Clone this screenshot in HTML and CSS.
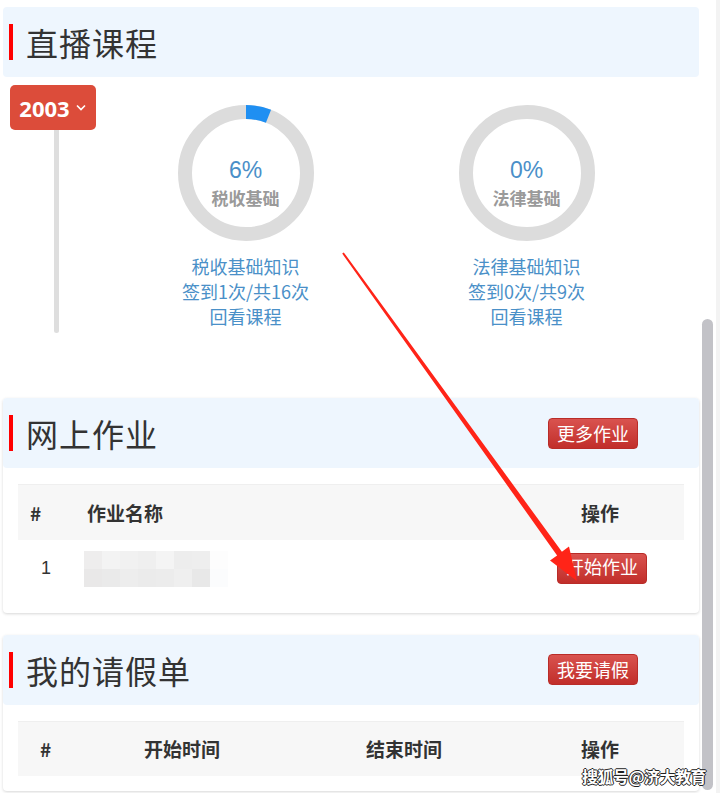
FILE: index.html
```html
<!DOCTYPE html>
<html lang="zh-CN">
<head>
    <meta charset="UTF-8">
    <title>学习中心</title>
    <link rel="stylesheet" href="styles.css">
</head>
<body>
<div class="page">
    <div class="main">
        <!-- 直播课程 -->
        <section class="card card-live">
            <div class="head">
                <h2>直播课程</h2>
            </div>
            <div class="live">
                <div class="year">
                    <span class="year-btn">2003 <svg width="10" height="7" viewBox="0 0 10 7"><path d="M1 1.5 L5 5.5 L9 1.5" fill="none" stroke="#fff" stroke-width="1.6"/></svg></span>
                    <span class="year-line"></span>
                </div>
                <div class="course">
                    <div class="ring">
                        <svg width="136" height="136" viewBox="0 0 136 136">
                            <circle cx="68" cy="68" r="61" fill="none" stroke="#dcdcdc" stroke-width="14"/>
                            <circle cx="68" cy="68" r="61" fill="none" stroke="#1f8ff2" stroke-width="14"
                                    stroke-dasharray="23 400" transform="rotate(-90 68 68)"/>
                        </svg>
                        <div class="ring-text">
                            <span class="pct">6%</span>
                            <span class="name">税收基础</span>
                        </div>
                    </div>
                    <p>税收基础知识</p>
                    <p>签到1次/共16次</p>
                    <p>回看课程</p>
                </div>
                <div class="course">
                    <div class="ring">
                        <svg width="136" height="136" viewBox="0 0 136 136">
                            <circle cx="68" cy="68" r="61" fill="none" stroke="#dcdcdc" stroke-width="14"/>
                        </svg>
                        <div class="ring-text">
                            <span class="pct">0%</span>
                            <span class="name">法律基础</span>
                        </div>
                    </div>
                    <p>法律基础知识</p>
                    <p>签到0次/共9次</p>
                    <p>回看课程</p>
                </div>
            </div>
        </section>

        <!-- 网上作业 -->
        <section class="card">
            <div class="head">
                <h2>网上作业</h2>
                <a class="btn" href="#">更多作业</a>
            </div>
            <table class="tb tb-work">
                <thead>
                <tr><th class="c1">#</th><th class="c2">作业名称</th><th class="c3">操作</th></tr>
                </thead>
                <tbody>
                <tr>
                    <td class="c1">1</td>
                    <td class="c2">
                        <div class="mosaic">
                            <i style="background:#eeeded"></i><i style="background:#f3f3f3"></i><i style="background:#f1f1f1"></i><i style="background:#efefef"></i><i style="background:#f4f4f4"></i><i style="background:#ededed"></i><i style="background:#eeeeee"></i><i style="background:#fdfdfd"></i>
                            <i style="background:#e9e8e8"></i><i style="background:#eaeaea"></i><i style="background:#ededed"></i><i style="background:#ebebeb"></i><i style="background:#ececec"></i><i style="background:#efefef"></i><i style="background:#e8e8e8"></i><i style="background:#fbfcfd"></i>
                        </div>
                    </td>
                    <td class="c3"><a class="btn" href="#">开始作业</a></td>
                </tr>
                </tbody>
            </table>
        </section>

        <!-- 我的请假单 -->
        <section class="card">
            <div class="head">
                <h2>我的请假单</h2>
                <a class="btn" href="#">我要请假</a>
            </div>
            <table class="tb tb-leave">
                <thead>
                <tr><th class="l1">#</th><th class="l2">开始时间</th><th class="l3">结束时间</th><th class="l4">操作</th></tr>
                </thead>
            </table>
        </section>
    </div>
    <div class="scroll">
        <div class="thumb"></div>
    </div>

    <!-- 标注箭头 -->
    <svg class="arrow" width="720" height="793" viewBox="0 0 720 793">
        <polygon points="343.8,252.4 561.9,551.8 569,546.5 577,581 550,560.5 557.1,555.4 342.2,253.6" fill="#ff2418"/>
    </svg>
    <div class="mark">搜狐号@济大教育</div>
</div>
</body>
</html>
```

FILE: styles.css
```css
*{
    margin: 0;
    padding: 0;
    box-sizing: border-box;
}
body{
    background: #fff;
    font-family: "Noto Sans CJK SC", "Noto Sans", sans-serif;
    color: #333;
    height: 793px;
    overflow: hidden;
}
.page{
    position: relative;
    display: flex;
    height: 793px;
}
.main{
    width: 699px;
    padding: 7px 0 0 3px;
}
a{
    text-decoration: none;
}

/*卡片*/
.card{
    border-radius: 4px;
    box-shadow: 0 1px 3px rgba(0, 0, 0, 0.16);
    margin-bottom: 22px;
    padding-bottom: 15px;
}
.card-live{
    box-shadow: none;
    margin-bottom: 0;
    padding-bottom: 0;
}
.head{
    height: 70px;
    background: #eef6fe;
    border-radius: 4px;
    display: flex;
    align-items: center;
    justify-content: space-between;
    padding: 0 61px 0 6px;
}
.head h2{
    font-size: 32px;
    font-weight: normal;
    color: #333;
    border-left: 4px solid #f00;
    padding-left: 13px;
    line-height: 36px;
    height: 36px;
    letter-spacing: 1px;
}
.btn{
    display: inline-block;
    height: 31px;
    line-height: 28px;
    padding: 0 8px;
    font-size: 18px;
    color: #fff;
    background: linear-gradient(#d9534f, #c12e2a);
    border: 1px solid #b92c28;
    border-radius: 4px;
}

/*直播课程*/
.live{
    display: flex;
    padding: 8px 0 65px 8px;
}
.year{
    width: 94px;
    display: flex;
    flex-direction: column;
    align-items: center;
    padding-right: 3px;
}
.year-btn{
    width: 86px;
    height: 45px;
    background: #dc4c3a;
    border-radius: 5px;
    color: #fff;
    font-family: "Open Sans", sans-serif;
    font-weight: 700;
    font-size: 22px;
    display: flex;
    align-items: center;
    justify-content: center;
    gap: 6px;
    margin-left: -8px;
}
.year-line{
    width: 5px;
    height: 203px;
    background: #dedede;
    border-radius: 0 0 3px 3px;
}
.course{
    width: 281px;
    padding-top: 20px;
    text-align: center;
}
.ring{
    position: relative;
    width: 136px;
    height: 136px;
    margin: 0 auto 13px;
}
.ring svg{
    display: block;
}
.ring-text{
    position: absolute;
    left: 0;
    top: 0;
    width: 100%;
    height: 100%;
    display: flex;
    flex-direction: column;
    align-items: center;
    justify-content: center;
    padding-top: 22px;
}
.ring-text .pct{
    font-family: "Liberation Sans", sans-serif;
    font-size: 23px;
    line-height: 28px;
    color: #4a8fc8;
}
.ring-text .name{
    font-size: 17px;
    line-height: 28px;
    font-weight: 700;
    color: #9a9a9a;
}
.course p{
    font-size: 18px;
    line-height: 25px;
    color: #4a90c8;
}

/*表格*/
.tb{
    width: 666px;
    margin: 16px 0 0 15px;
    border-collapse: collapse;
}
.tb th{
    height: 55px;
    background: #f7f7f7;
    border-top: 1px solid #efefef;
    font-size: 19px;
    font-weight: 600;
    color: #333;
    text-align: left;
}
.tb td{
    height: 58px;
    font-size: 18px;
    font-family: "Liberation Sans", sans-serif;
}
.tb-work .c1{
    width: 57px;
    padding-left: 12px;
}
.tb-work td.c1{
    padding-left: 23px;
}
.tb-work .c2{
    padding-left: 12px;
}
.tb-work .c3{
    width: 150px;
    padding-left: 47px;
}
.tb-work td.c3{
    padding-left: 23px;
}
.mosaic{
    display: grid;
    grid-template-columns: repeat(8, 18px);
    grid-auto-rows: 18px;
    margin-left: -3px;
}
.tb-leave .l1{
    width: 60px;
    padding-left: 22px;
}
.tb-leave .l2{
    width: 222px;
    padding-left: 66px;
}
.tb-leave .l3{
    width: 214px;
    padding-left: 66px;
}
.tb-leave .l4{
    padding-left: 67px;
}

/*滚动条*/
.scroll{
    width: 21px;
    padding: 319px 0 3px 3px;
    border-right: 4px solid #f3f3f3;
}
.thumb{
    width: 11px;
    height: 100%;
    background: #c2c2c7;
    border-radius: 6px;
}

/*标注*/
.arrow{
    position: absolute;
    left: 0;
    top: 0;
    pointer-events: none;
}
.mark{
    position: absolute;
    left: 582px;
    top: 764px;
    font-size: 16px;
    font-weight: 700;
    color: #fff;
    letter-spacing: -0.5px;
    text-shadow: 1px 0 0 #222, -1px 0 0 #222, 0 1px 0 #222, 0 -1px 0 #222;
}
```
